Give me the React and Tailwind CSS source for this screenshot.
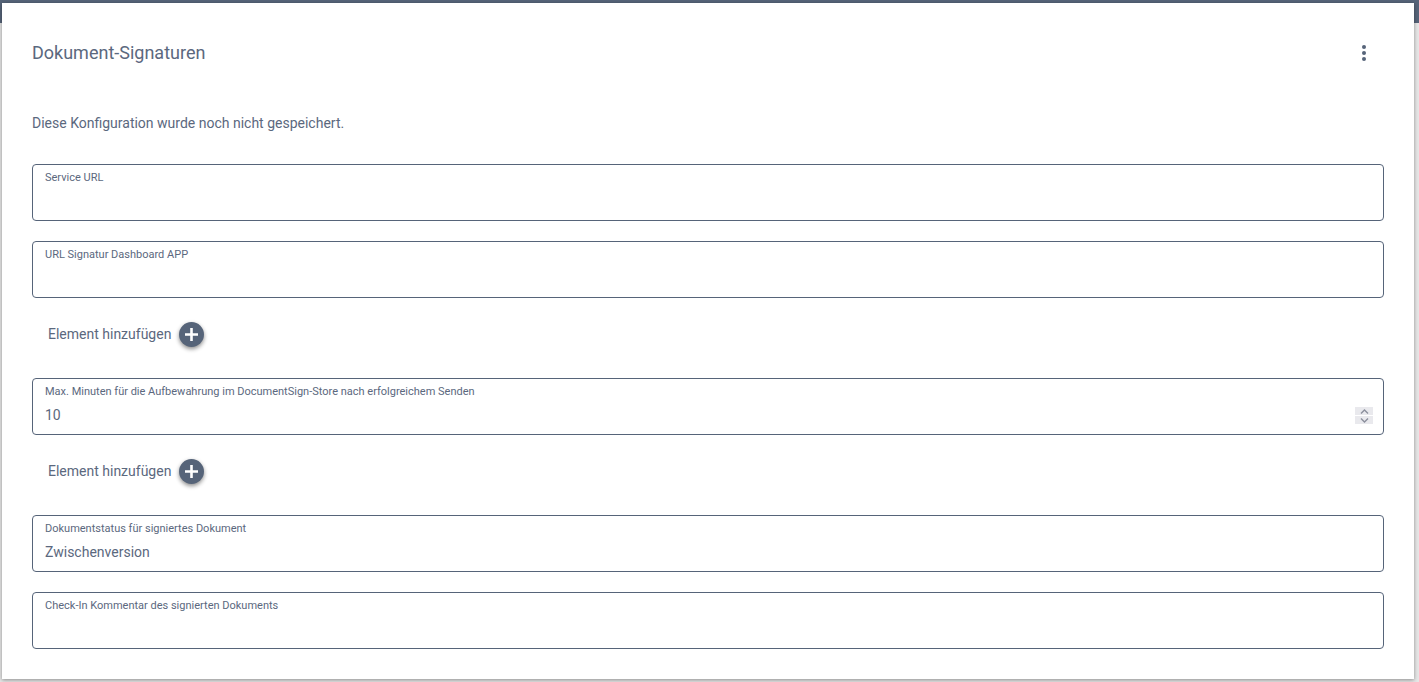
import React from "react";

function Field({ label, value, spinner }) {
  return (
    <div className="relative h-[57px] rounded-[4px] border border-[#566479] px-3 pt-[6px]">
      <div className="text-[11px] leading-[14px] text-[#5b687e]">{label}</div>
      <div className="mt-[6px] h-[20px] text-[14px] leading-[20px] text-[#5b687e]">{value}</div>
      {spinner && (
        <div className="absolute right-[10px] top-[28px] flex h-[17px] w-[18px] flex-col gap-px">
          <div className="flex flex-1 items-center justify-center bg-[#e9e9ed]">
            <svg width="9" height="5" viewBox="0 0 9 5" fill="none" stroke="#8b8f9c" strokeWidth="1.4"><path d="M1 4.5l3.5-3.5 3.5 3.5" /></svg>
          </div>
          <div className="flex flex-1 items-center justify-center bg-[#e9e9ed]">
            <svg width="9" height="5" viewBox="0 0 9 5" fill="none" stroke="#8b8f9c" strokeWidth="1.4"><path d="M1 .5l3.5 3.5 3.5-3.5" /></svg>
          </div>
        </div>
      )}
    </div>
  );
}

function AddRow({ className }) {
  return (
    <div className={`flex h-[26px] items-center gap-2 pl-4 ${className}`}>
      <span className="text-[14px] leading-[20px] text-[#5b687e]">Element hinzufügen</span>
      <button className="flex h-[25px] w-[25px] items-center justify-center rounded-full bg-[#566479] shadow-[0_2px_4px_rgba(0,0,0,0.45)]">
        <svg width="15" height="15" viewBox="0 0 15 15" stroke="#fff" strokeWidth="2.6"><path d="M7.5 1v13M1 7.5h13" /></svg>
      </button>
    </div>
  );
}

export default function App() {
  return (
    <div className="h-[682px] w-full overflow-hidden bg-[linear-gradient(#566479_23px,#e6e6e6_23px)] pl-[2px] pr-[5px] pt-[3px] font-['Roboto',sans-serif] antialiased">
      <div className="h-[676px] bg-white px-[30px] shadow-[0_1px_4px_rgba(0,0,0,0.4)]">
        <div className="flex h-[110px] items-start justify-between pt-[37px]">
          <h2 className="text-[18px] leading-[26px] font-normal text-[#5b687e]">Dokument-Signaturen</h2>
          <svg className="mr-[18px] mt-[5px]" width="4" height="16" viewBox="0 0 4 16" fill="#566479">
            <circle cx="2" cy="2" r="2" />
            <circle cx="2" cy="8" r="2" />
            <circle cx="2" cy="14" r="2" />
          </svg>
        </div>
        <p className="text-[14px] leading-[20px] text-[#5b687e]">Diese Konfiguration wurde noch nicht gespeichert.</p>
        <div className="mt-[31px] flex flex-col">
          <Field label="Service URL" />
          <div className="mt-[20px]"><Field label="URL Signatur Dashboard APP" /></div>
          <AddRow className="mt-[23px]" />
          <div className="mt-[31px]"><Field label="Max. Minuten für die Aufbewahrung im DocumentSign-Store nach erfolgreichem Senden" value="10" spinner /></div>
          <AddRow className="mt-[23px]" />
          <div className="mt-[31px]"><Field label="Dokumentstatus für signiertes Dokument" value="Zwischenversion" /></div>
          <div className="mt-[20px]"><Field label="Check-In Kommentar des signierten Dokuments" /></div>
        </div>
      </div>
    </div>
  );
}
